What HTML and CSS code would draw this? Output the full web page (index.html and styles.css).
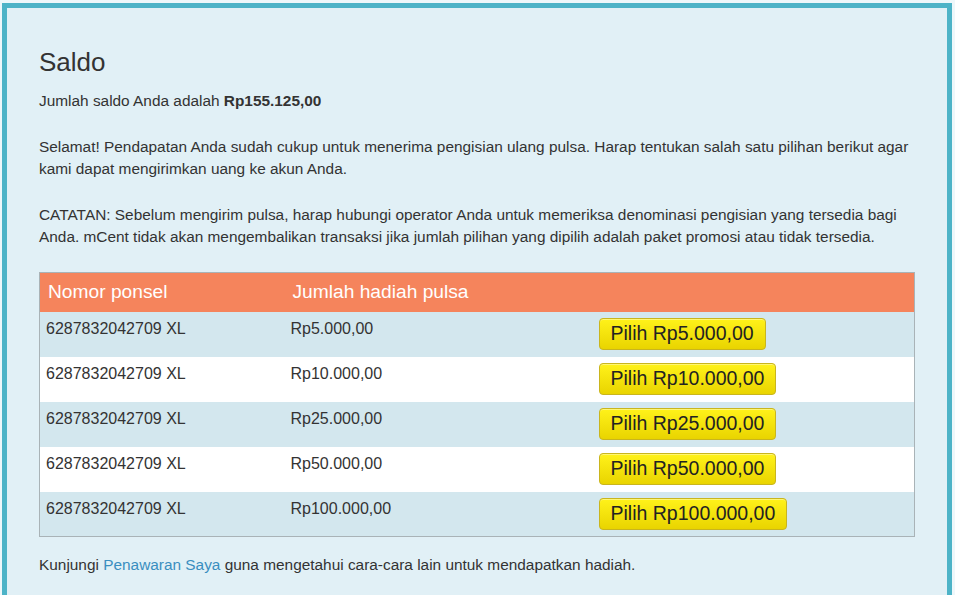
FILE: index.html
```html
<!DOCTYPE html>
<html lang="id">
<head>
<meta charset="utf-8">
<title>Saldo</title>
<link rel="stylesheet" href="styles.css">
</head>
<body>
<div class="frame">
  <div class="content">
    <h1 class="title">Saldo</h1>
    <p class="balance">Jumlah saldo Anda adalah <strong>Rp155.125,00</strong></p>
    <p class="para">Selamat! Pendapatan Anda sudah cukup untuk menerima pengisian ulang pulsa. Harap tentukan salah satu pilihan berikut agar kami dapat mengirimkan uang ke akun Anda.</p>
    <p class="para">CATATAN: Sebelum mengirim pulsa, harap hubungi operator Anda untuk memeriksa denominasi pengisian yang tersedia bagi Anda. mCent tidak akan mengembalikan transaksi jika jumlah pilihan yang dipilih adalah paket promosi atau tidak tersedia.</p>
    <table class="rewards">
      <thead>
        <tr><th class="c1">Nomor ponsel</th><th class="c2">Jumlah hadiah pulsa</th><th class="c3"></th></tr>
      </thead>
      <tbody>
        <tr class="alt"><td>6287832042709 XL</td><td>Rp5.000,00</td><td><button class="pick">Pilih Rp5.000,00</button></td></tr>
        <tr><td>6287832042709 XL</td><td>Rp10.000,00</td><td><button class="pick">Pilih Rp10.000,00</button></td></tr>
        <tr class="alt"><td>6287832042709 XL</td><td>Rp25.000,00</td><td><button class="pick">Pilih Rp25.000,00</button></td></tr>
        <tr><td>6287832042709 XL</td><td>Rp50.000,00</td><td><button class="pick">Pilih Rp50.000,00</button></td></tr>
        <tr class="alt"><td>6287832042709 XL</td><td>Rp100.000,00</td><td><button class="pick">Pilih Rp100.000,00</button></td></tr>
      </tbody>
    </table>
    <p class="footer">Kunjungi <a class="link" href="#">Penawaran Saya</a> guna mengetahui cara-cara lain untuk mendapatkan hadiah.</p>
  </div>
</div>
</body>
</html>
```
FILE: styles.css
```css
html, body {
  margin: 0;
  padding: 0;
  background: #eef7fa;
}
body {
  font-family: "Liberation Sans", Arial, sans-serif;
  color: #333333;
  font-size: 15.4px;
  line-height: 22px;
  padding: 3px 3px 0 2px;
}
.frame {
  border: 5px solid #4db3c7;
  border-bottom: none;
  background: #e1f0f6;
  min-height: 600px;
}
.content {
  padding: 38px 32px 0 32px;
}
.title {
  font-size: 26px;
  font-weight: normal;
  line-height: 32px;
  margin: 0;
  color: #333;
}
.balance {
  margin: 12px 0 0;
}
.balance strong {
  font-weight: bold;
}
.para {
  margin: 24px 0 0;
}
.rewards {
  margin-top: 24px;
  width: 876px;
  border-collapse: collapse;
  border: 1px solid #a9b3b7;
}
.rewards th {
  background: #f5845c;
  color: #ffffff;
  font-weight: normal;
  font-size: 19.2px;
  text-align: left;
  height: 39px;
  padding: 0 0 0 8px;
  box-sizing: border-box;
  vertical-align: middle;
}
.rewards th.c1 { width: 245px; }
.rewards th.c2 { width: 307px; }
.rewards td {
  font-size: 16px;
  line-height: 20px;
  height: 45px;
  box-sizing: border-box;
  padding: 7px 7px 0 6px;
  vertical-align: top;
  background: #ffffff;
  color: #333;
}
.rewards tr.alt td {
  background: #d3e7ee;
}
.pick {
  font-family: "Liberation Sans", Arial, sans-serif;
  font-size: 19.5px;
  color: #222;
  height: 32px;
  padding: 0 11px;
  margin-top: -1px;
  margin-left: 1px;
  background: linear-gradient(#fff21a, #e9d400);
  border: 1px solid #c9b51e;
  border-radius: 4px;
  box-shadow: inset 0 1px 0 rgba(255,255,255,0.4);
  cursor: pointer;
}
.footer {
  margin: 17px 0 0;
}
.link {
  color: #3a8ec0;
  text-decoration: none;
}
```
